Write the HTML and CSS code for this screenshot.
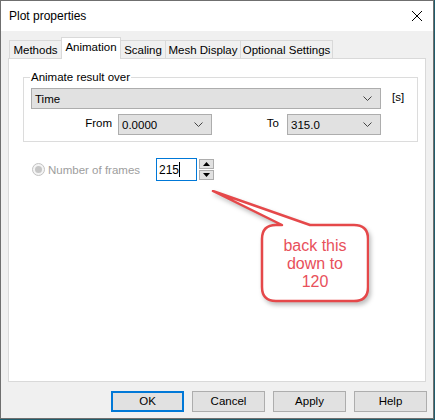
FILE: index.html
```html
<!DOCTYPE html>
<html>
<head>
<meta charset="utf-8">
<link rel="stylesheet" href="styles.css">
</head>
<body>
<div class="window">
  <div class="titlebar">
    <span class="title">Plot properties</span>
    <svg class="close" width="12" height="12" viewBox="0 0 12 12"><path d="M1 1 L11 11 M11 1 L1 11" stroke="#000" stroke-width="1"/></svg>
  </div>
  <div class="body">
    <div class="tabs">
      <div class="tab t-methods">Methods</div>
      <div class="tab t-anim active">Animation</div>
      <div class="tab t-scaling">Scaling</div>
      <div class="tab t-mesh">Mesh Display</div>
      <div class="tab t-opt">Optional Settings</div>
    </div>
    <div class="panel">
      <fieldset class="group">
        <legend>Animate result over</legend>
        <div class="row1">
          <div class="combo wide"><span>Time</span><svg class="chev" width="9" height="5" viewBox="0 0 9 5"><path d="M0.5 0.5 L4.5 4.5 L8.5 0.5" fill="none" stroke="#444" stroke-width="1"/></svg></div>
          <span class="unit">[s]</span>
        </div>
        <div class="row2">
          <span class="lbl from">From</span>
          <div class="combo mid"><span>0.0000</span><svg class="chev" width="9" height="5" viewBox="0 0 9 5"><path d="M0.5 0.5 L4.5 4.5 L8.5 0.5" fill="none" stroke="#444" stroke-width="1"/></svg></div>
          <span class="lbl to">To</span>
          <div class="combo mid2"><span>315.0</span><svg class="chev" width="9" height="5" viewBox="0 0 9 5"><path d="M0.5 0.5 L4.5 4.5 L8.5 0.5" fill="none" stroke="#444" stroke-width="1"/></svg></div>
        </div>
      </fieldset>
      <div class="frames">
        <span class="radio"><span class="dot"></span></span>
        <span class="flabel">Number of frames</span>
        <div class="input"><span>215</span><span class="caret"></span></div>
        <div class="spin">
          <div class="sbtn"><svg width="7" height="4" viewBox="0 0 7 4"><path d="M0 4 L3.5 0 L7 4 Z" fill="#000"/></svg></div>
          <div class="sbtn"><svg width="7" height="4" viewBox="0 0 7 4"><path d="M0 0 L3.5 4 L7 0 Z" fill="#000"/></svg></div>
        </div>
      </div>
    </div>
    <div class="buttons">
      <div class="btn default">OK</div>
      <div class="btn">Cancel</div>
      <div class="btn">Apply</div>
      <div class="btn">Help</div>
    </div>
  </div>
  <div class="callout">
    <svg class="bubble" width="170" height="125" viewBox="0 0 170 125">
      <path d="M 78 36 L 84 36 L 15 2 L 112 36 L 156 36 Q 170 36 170 50 L 170 98 Q 170 112 156 112 L 78 112 Q 64 112 64 98 L 64 50 Q 64 36 78 36 Z" transform="translate(-1 -1)" fill="#fff" stroke="#e5484a" stroke-width="2.5" stroke-linejoin="round"/>
    </svg>
    <div class="ctext">back this<br>down to<br>120</div>
  </div>
</div>
</body>
</html>
```
FILE: styles.css
```css
* { box-sizing: border-box; }
body {
  margin: 0;
  background: #1f5c6b;
  font-family: "Liberation Sans", Arial, sans-serif;
  font-size: 11px;
  color: #000;
}
.window {
  position: relative;
  width: 434px;
  height: 419px;
  border: 1px solid #6f6f6f;
  background: #f0f0f0;
  overflow: hidden;
}
.titlebar {
  height: 30px;
  background: #fff;
  display: flex;
  align-items: center;
  justify-content: space-between;
  padding: 0 10px 0 8px;
}
.title { font-size: 12px; margin-top: -1px; }
.close { display: block; margin-top: -1px; }
.body {
  padding-top: 6px;
}
.tabs {
  display: flex;
  align-items: flex-end;
  height: 21px;
  margin-left: 8px;
}
.tab {
  height: 18px;
  border: 1px solid #d9d9d9;
  border-bottom: none;
  background: #f0f0f0;
  text-align: center;
  line-height: 17px;
  padding-top: 1px;
  white-space: nowrap;
  font-size: 11.5px;
}
.tab.active {
  height: 22px;
  background: #fff;
  margin-bottom: -1px;
  position: relative;
  z-index: 1;
  line-height: 18px;
  padding-top: 0;
}
.t-methods { width: 52px; border-right: none; }
.t-anim { width: 60px; }
.t-scaling { width: 45px; border-left: none; }
.t-mesh { width: 75px; border-left: none; }
.t-opt { width: 92px; border-left: none; }
.panel {
  margin-left: 7px;
  width: 418px;
  height: 324px;
  border: 1px solid #d9d9d9;
  background: #fff;
  padding-top: 11px;
}
.group {
  margin: 0 0 0 14px;
  width: 395px;
  border: 1px solid #dcdcdc;
  padding: 4px 0 6px 7px;
}
.group legend {
  padding: 0 1px;
  margin-left: -1px;
  line-height: 14px;
  font-size: 11.5px;
}
.row1 { display: flex; align-items: center; }
.combo {
  height: 21px;
  background: #e1e1e1;
  border: 1px solid #adadad;
  display: flex;
  align-items: center;
  justify-content: space-between;
  padding: 0 8px 0 3px;
  font-size: 11.5px;
}
.combo span { margin-top: 1px; }
.combo .chev { display: block; }
.wide { width: 350px; }
.unit { margin-left: 11px; margin-top: -4px; font-size: 11.5px; }
.row2 { display: flex; margin-top: 5px; }
.lbl { padding-top: 3px; text-align: right; font-size: 11.5px; }
.from { width: 87px; padding-right: 6px; }
.mid { width: 94px; }
.to { width: 75px; padding-right: 8px; }
.mid2 { width: 94px; }
.frames {
  display: flex;
  align-items: center;
  margin-top: 16px;
  margin-left: 23px;
}
.radio {
  width: 13px;
  height: 13px;
  border: 1px solid #c2c2c2;
  border-radius: 50%;
  background: #f4f4f4;
  display: flex;
  align-items: center;
  justify-content: center;
}
.radio .dot {
  width: 7px;
  height: 7px;
  border-radius: 50%;
  background: #c6c6c6;
}
.flabel {
  color: #9d9d9d;
  width: 111px;
  padding-left: 3px;
  font-size: 11.5px;
}
.input {
  width: 41px;
  height: 23px;
  border: 1px solid #0078d7;
  display: flex;
  align-items: center;
  padding-left: 2px;
  font-size: 12px;
}
.caret {
  width: 1px;
  height: 15px;
  background: #000;
  margin-left: 0;
}
.spin {
  margin-left: 2px;
  display: flex;
  flex-direction: column;
  gap: 1px;
  margin-top: -1px;
}
.sbtn {
  width: 15px;
  height: 10px;
  background: #e1e1e1;
  border: 1px solid #adadad;
  display: flex;
  align-items: center;
  justify-content: center;
}
.sbtn svg { display: block; }
.buttons {
  display: flex;
  justify-content: flex-end;
  gap: 8px;
  margin-top: 9px;
  padding-right: 6px;
}
.btn {
  width: 73px;
  height: 21px;
  background: #e1e1e1;
  border: 1px solid #adadad;
  text-align: center;
  line-height: 19px;
  font-size: 11.5px;
}
.btn.default {
  border: 2px solid #0078d7;
  line-height: 17px;
}
.callout {
  position: absolute;
  left: 198px;
  top: 189px;
  width: 170px;
  height: 125px;
}
.bubble {
  position: absolute;
  left: 0;
  top: 0;
  filter: drop-shadow(2px 3px 2px rgba(0,0,0,0.25));
}
.ctext {
  position: absolute;
  left: 63px;
  top: 47px;
  width: 106px;
  text-align: center;
  font-family: "Liberation Sans", Arial, sans-serif;
  font-size: 16px;
  line-height: 18px;
  color: #e8505b;
}
```
